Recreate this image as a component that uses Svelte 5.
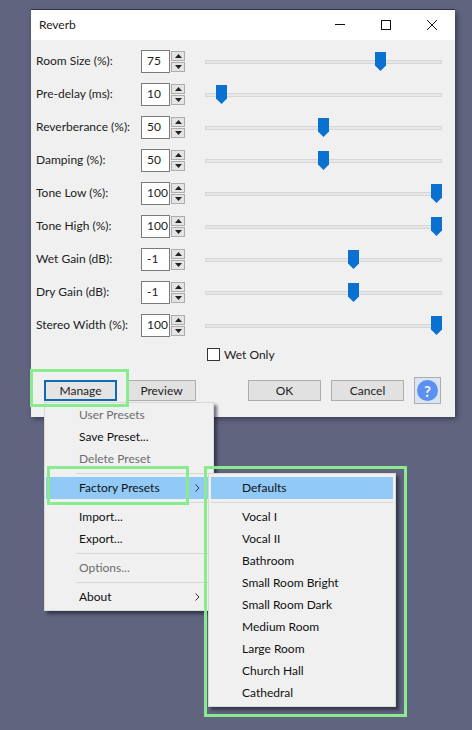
<script>
  const rows = [
    { label: 'Room Size (%):', value: '75', thumb: 175.5 },
    { label: 'Pre-delay (ms):', value: '10', thumb: 16.5 },
    { label: 'Reverberance (%):', value: '50', thumb: 118.5 },
    { label: 'Damping (%):', value: '50', thumb: 118.5 },
    { label: 'Tone Low (%):', value: '100', thumb: 231.5 },
    { label: 'Tone High (%):', value: '100', thumb: 231.5 },
    { label: 'Wet Gain (dB):', value: '-1', thumb: 148.5 },
    { label: 'Dry Gain (dB):', value: '-1', thumb: 148.5 },
    { label: 'Stereo Width (%):', value: '100', thumb: 231.5 }
  ];
  const presets = ['Vocal I', 'Vocal II', 'Bathroom', 'Small Room Bright', 'Small Room Dark', 'Medium Room', 'Large Room', 'Church Hall', 'Cathedral'];
</script>

<div class="page">
  <div class="window">
    <header class="titlebar">
      <span class="title">Reverb</span>
      <div class="controls">
        <svg width="12" height="12" viewBox="0 0 12 12"><path d="M1 5.5H11" stroke="#111" stroke-width="1" fill="none"/></svg>
        <svg width="12" height="12" viewBox="0 0 12 12"><rect x="1.5" y="1.5" width="9" height="9" stroke="#111" stroke-width="1" fill="none"/></svg>
        <svg width="12" height="12" viewBox="0 0 12 12"><path d="M1 1L11 11M11 1L1 11" stroke="#111" stroke-width="1" fill="none"/></svg>
      </div>
    </header>
    <div class="body">
      <div class="rows">
        {#each rows as row}
          <div class="row">
            <span class="label">{row.label}</span>
            <div class="input">{row.value}</div>
            <div class="spin">
              <span class="spinbtn"><svg width="7" height="4" viewBox="0 0 7 4"><path d="M3.5 0L7 4H0Z" fill="#222"/></svg></span>
              <span class="spinbtn"><svg width="7" height="4" viewBox="0 0 7 4"><path d="M0 0H7L3.5 4Z" fill="#222"/></svg></span>
            </div>
            <div class="slider">
              <div class="track"></div>
              <svg class="thumb" style="left:{row.thumb - 5.5}px" width="11" height="19" viewBox="0 0 11 19"><path d="M0 0H11V13.5L5.5 19L0 13.5Z" fill="#0b71d0"/></svg>
            </div>
          </div>
        {/each}
      </div>
      <label class="wet"><span class="check"></span>Wet Only</label>
      <div class="actions">
        <div class="left-actions">
          <button class="btn manage">Manage</button>
          <button class="btn preview">Preview</button>
        </div>
        <div class="right-actions">
          <button class="btn">OK</button>
          <button class="btn">Cancel</button>
          <div class="help"><span class="help-circle">?</span></div>
        </div>
      </div>
    </div>
  </div>

  <div class="menu main-menu">
    <div class="item disabled">User Presets</div>
    <div class="item">Save Preset...</div>
    <div class="item disabled">Delete Preset</div>
    <div class="sep"></div>
    <div class="item active">Factory Presets<svg class="chev" width="5" height="8" viewBox="0 0 5 8"><path d="M0.5 0.5L4 4L0.5 7.5" stroke="#333" fill="none"/></svg></div>
    <div class="sep"></div>
    <div class="item">Import...</div>
    <div class="item">Export...</div>
    <div class="sep"></div>
    <div class="item disabled">Options...</div>
    <div class="sep"></div>
    <div class="item">About<svg class="chev" width="5" height="8" viewBox="0 0 5 8"><path d="M0.5 0.5L4 4L0.5 7.5" stroke="#333" fill="none"/></svg></div>
  </div>

  <div class="menu sub-menu">
    <div class="item active">Defaults</div>
    <div class="sep"></div>
    {#each presets as p}
      <div class="item">{p}</div>
    {/each}
  </div>

  <div class="mark mark-manage"></div>
  <div class="mark mark-factory"></div>
  <div class="mark mark-sub"></div>
</div>

<style>
  :global(body) {
    margin: 0;
    background: #60647f;
  }
  .page {
    position: relative;
    width: 472px;
    height: 730px;
    overflow: hidden;
    padding: 10px 0 0 31px;
    box-sizing: border-box;
    background: #60647f;
    font-family: Lato, "Open Sans", sans-serif;
    font-size: 12px;
    color: #222;
  }
  .window {
    width: 424px;
    height: 407px;
    background: #f0f0f0;
    box-shadow: 2px 2px 5px rgba(30, 30, 50, 0.55), 0 -1px 0 #33344a;
  }
  .titlebar {
    height: 30px;
    background: #fff;
    display: flex;
    align-items: center;
    justify-content: space-between;
    padding: 0 17px 0 8px;
  }
  .title {
    padding-bottom: 2px;
  }
  .controls {
    display: flex;
    gap: 34px;
    align-items: center;
  }
  .body {
    padding: 5px 14px 0 5px;
  }
  .rows {
    margin-right: -1px;
  }
  .row {
    height: 33px;
    display: flex;
    align-items: center;
  }
  .label {
    width: 105px;
    white-space: nowrap;
    padding-bottom: 2px;
  }
  .input {
    width: 29px;
    height: 23px;
    box-sizing: border-box;
    border: 1px solid #7a7a7a;
    background: #fff;
    display: flex;
    align-items: center;
    padding: 0 0 2px 5px;
  }
  .spin {
    width: 14px;
    margin-left: 1px;
    display: flex;
    flex-direction: column;
    gap: 1px;
  }
  .spinbtn {
    height: 10px;
    box-sizing: border-box;
    border: 1px solid #adadad;
    background: #e4e4e4;
    display: flex;
    align-items: center;
    justify-content: center;
  }
  .slider {
    position: relative;
    width: 237px;
    margin-left: 20px;
    height: 19px;
    display: flex;
    align-items: center;
  }
  .track {
    width: 100%;
    height: 4px;
    box-sizing: border-box;
    background: #e7e7e7;
    border: 1px solid #d6d6d6;
  }
  .thumb {
    position: absolute;
    top: 0;
  }
  .wet {
    margin: 2px 0 0 171px;
    display: flex;
    align-items: center;
    gap: 4px;
    height: 20px;
  }
  .check {
    width: 13px;
    height: 13px;
    box-sizing: border-box;
    border: 1px solid #333;
    background: #fff;
  }
  .actions {
    margin-top: 13px;
    display: flex;
    justify-content: space-between;
    align-items: center;
    padding-left: 8px;
  }
  .left-actions, .right-actions {
    display: flex;
    align-items: center;
    gap: 10px;
  }
  .btn {
    width: 73px;
    height: 21px;
    padding: 0;
    box-sizing: border-box;
    border: 1px solid #adadad;
    background: #e1e1e1;
    font: inherit;
    color: #222;
  }
  .manage {
    border: 2px solid #0f6cb4;
    background: #e4e4e4;
  }
  .preview {
    width: 69px;
  }
  .help {
    width: 27px;
    height: 27px;
    box-sizing: border-box;
    border: 1px solid #adadad;
    background: #d9e4f4;
    display: flex;
    align-items: center;
    justify-content: center;
  }
  .help-circle {
    width: 21px;
    height: 21px;
    border-radius: 50%;
    background: #5b8ff0;
    color: #f2f5fd;
    font-weight: 700;
    font-size: 15px;
    display: flex;
    align-items: center;
    justify-content: center;
  }
  .menu {
    position: absolute;
    background: #f0f0f0;
    box-sizing: border-box;
    box-shadow: 3px 3px 3px rgba(25, 25, 40, 0.6);
    border: 1px solid #d8d8d8;
    color: #111;
  }
  .main-menu {
    left: 44px;
    top: 402px;
    width: 170px;
    height: 209px;
    padding: 1px 0 0 1px;
  }
  .sub-menu {
    left: 208px;
    top: 473px;
    width: 188px;
    height: 234px;
    padding: 3px 2px;
  }
  .item {
    position: relative;
    height: 22px;
    line-height: 22px;
    padding-left: 33px;
    white-space: nowrap;
  }
  .sub-menu .item {
    padding-left: 31px;
  }
  .item.disabled {
    color: #6d6d6d;
  }
  .item.active {
    background: #91c9f7;
  }
  .sep {
    height: 1px;
    margin: 3px 3px 3px 30px;
    background: #d7d7d7;
  }
  .sub-menu .sep {
    margin: 3px 0;
  }
  .chev {
    position: absolute;
    right: 13px;
    top: 7px;
  }
  .mark {
    position: absolute;
    box-sizing: border-box;
    border: 3px solid #8aea8e;
    pointer-events: none;
  }
  .mark-manage {
    left: 30px;
    top: 369px;
    width: 99px;
    height: 38px;
  }
  .mark-factory {
    left: 47px;
    top: 466px;
    width: 142px;
    height: 39px;
  }
  .mark-sub {
    left: 204px;
    top: 466px;
    width: 203px;
    height: 251px;
  }
</style>
